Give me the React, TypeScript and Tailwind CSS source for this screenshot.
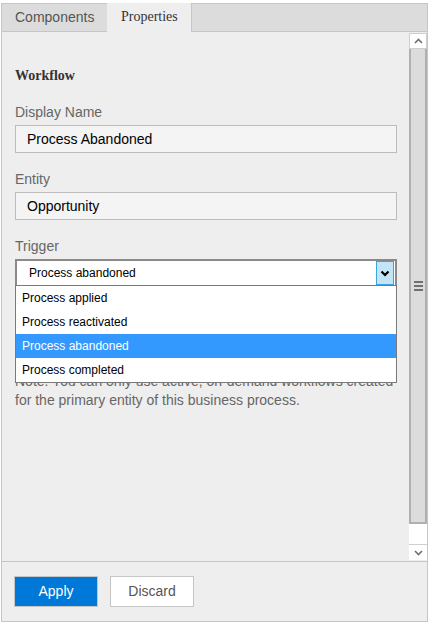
import React from "react";

const ui = "font-['Segoe_UI','Liberation_Sans',Arial,sans-serif]";

function Field({ label, value }: { label: string; value: string }) {
  return (
    <div className="mb-[16px]">
      <div className="h-[20px] text-[14px] leading-[20px] text-[#666]">{label}</div>
      <div className="mt-[3px] h-[28px] border border-[#bcbcbc] bg-[#f4f4f4] pl-[11px] text-[14px] leading-[26px] text-black">
        {value}
      </div>
    </div>
  );
}

const options = ["Process applied", "Process reactivated", "Process abandoned", "Process completed"];

function Scrollbar() {
  return (
    <div className="flex w-[18px] flex-col pt-[1px] pb-[1px]">
      <div className="flex h-[16px] items-center justify-center border border-[#cfcfcf] bg-white">
        <svg width="9" height="6" viewBox="0 0 9 6" fill="none" stroke="#707070" strokeWidth="1.6">
          <path d="M1 5 L4.5 1.5 L8 5" />
        </svg>
      </div>
      <div className="flex flex-1 items-center justify-center border-x-2 border-b-2 border-[#b0b0b0] bg-[#dcdcdc]">
        <div className="flex w-[9px] flex-col gap-[2px]">
          <div className="h-[2px] bg-[#707070]" />
          <div className="h-[2px] bg-[#707070]" />
          <div className="h-[2px] bg-[#707070]" />
        </div>
      </div>
      <div className="h-[20px] bg-white" />
      <div className="flex h-[16px] items-center justify-center border-t border-[#cfcfcf] bg-white">
        <svg width="9" height="6" viewBox="0 0 9 6" fill="none" stroke="#707070" strokeWidth="1.6">
          <path d="M1 1 L4.5 4.5 L8 1" />
        </svg>
      </div>
    </div>
  );
}

export default function App() {
  return (
    <div className={`h-[623px] w-[428px] bg-white pt-[3px] pl-[1px] ${ui}`}>
      <div className="flex h-[619px] flex-col border border-[#c6c6c6] bg-[#eeeeee]">
        {/* tabs */}
        <div className="flex h-[28px] items-end border-b border-[#c6c6c6] bg-[#dcdcdc]">
          <div className="mb-[-1px] h-[28px] px-[13px] text-[14px] leading-[27px] text-[#555]">Components</div>
          <div className="mb-[-1px] h-[29px] w-[85px] border-r border-[#c6c6c6] bg-[#eeeeee] text-center font-['Liberation_Serif',serif] text-[14px] leading-[27px] text-[#333]">
            Properties
          </div>
        </div>

        {/* body */}
        <div className="flex flex-1">
          <div className="relative flex-1 pt-[36px] pr-[12px] pl-[13px]">
            <div className="mb-[18px] h-[16px] font-['Liberation_Serif',serif] text-[14px] leading-[16px] font-bold text-[#333]">
              Workflow
            </div>
            <Field label="Display Name" value="Process Abandoned" />
            <Field label="Entity" value="Opportunity" />

            <div className="h-[20px] text-[14px] leading-[20px] text-[#666]">Trigger</div>
            <div className="mt-[3px] flex h-[28px] items-center justify-between border-2 border-[#8a8a8a] bg-white pl-[12px] pr-[1px]">
              <span className="text-[12px] text-black">Process abandoned</span>
              <span className="flex h-[24px] w-[18px] items-center justify-center border border-[#3ca4e0] bg-[#c4e4f8]">
                <svg width="10" height="7" viewBox="0 0 10 7" fill="none" stroke="#000" strokeWidth="2.2">
                  <path d="M1.5 1.5 L5 5 L8.5 1.5" />
                </svg>
              </span>
            </div>

            {/* hidden control behind the list */}
            <div className="mt-[24px] ml-auto h-[28px] w-[40px] border border-[#c6c6c6] bg-[#f4f4f4]" />

            <p className="mt-[33px] text-[14px] leading-[19px] text-[#666]">
              Note: You can only use active, on-demand workflows created for the primary entity of this business process.
            </p>

            {/* open dropdown list */}
            <div className="absolute top-[253px] left-[13px] w-[382px] border border-[#7a7a7a] bg-white">
              {options.map((o) => (
                <div
                  key={o}
                  className={`h-[24px] pl-[6px] text-[12px] leading-[24px] ${
                    o === "Process abandoned" ? "bg-[#3399ff] text-white" : "text-black"
                  }`}
                >
                  {o}
                </div>
              ))}
            </div>
          </div>
          <Scrollbar />
        </div>

        {/* footer */}
        <div className="flex h-[60px] gap-[12px] border-t border-[#c6c6c6] px-[12px] pt-[14px]">
          <button className="h-[31px] w-[84px] border border-[#c6c6c6] bg-[#0078d7] text-[14px] text-white">Apply</button>
          <button className="h-[31px] w-[84px] border border-[#c6c6c6] bg-white text-[14px] text-[#555]">Discard</button>
        </div>
      </div>
    </div>
  );
}
